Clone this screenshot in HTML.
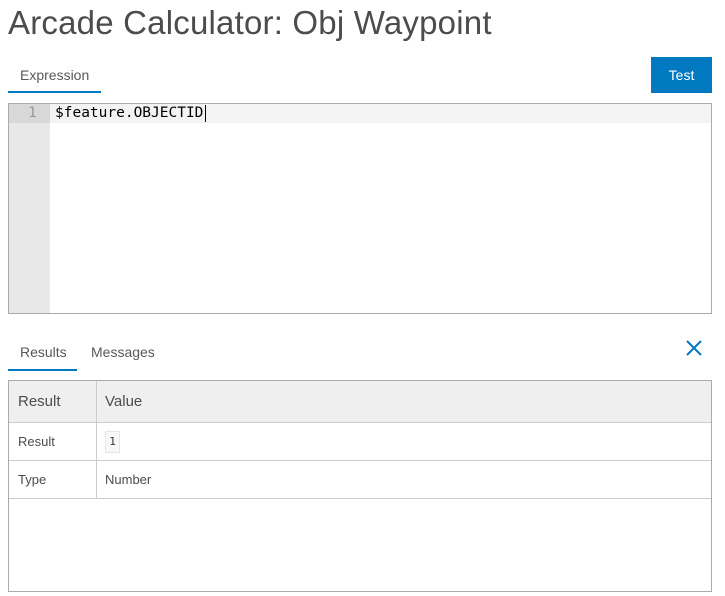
<!DOCTYPE html>
<html><head><style>
body{margin:0;width:725px;height:596px;background:#fff;font-family:"Liberation Sans",sans-serif;color:#4c4c4c;position:relative;overflow:hidden}
.a{position:absolute}
</style></head><body>
<div class="a" style="left:8px;top:4px;font-size:33px;color:#4c4c4c;letter-spacing:0.2px">Arcade Calculator: Obj Waypoint</div>
<div class="a" style="left:20px;top:67px;font-size:14px;color:#595959">Expression</div>
<div class="a" style="left:8px;top:91px;width:93px;height:2px;background:#0079c1"></div>
<div class="a" style="left:651px;top:57px;width:61px;height:36px;background:#0079c1;color:#fff;font-size:14px;text-align:center;line-height:36px">Test</div>
<div class="a" style="left:8px;top:103px;width:702px;height:209px;border:1px solid #aaa"></div>
<div class="a" style="left:9px;top:104px;width:41px;height:209px;background:#e8e8e8"></div>
<div class="a" style="left:9px;top:104px;width:702px;height:19px;background:#f3f3f3"></div>
<div class="a" style="left:9px;top:104px;width:41px;height:19px;background:#d8d8d8"></div>
<div class="a" style="left:28px;top:105px;font-family:'DejaVu Sans Mono',monospace;font-size:14.5px;color:#999">1</div>
<div class="a" style="left:55px;top:105px;font-family:'DejaVu Sans Mono',monospace;font-size:14.5px;color:#000">$feature.OBJECTID</div>
<div class="a" style="left:205px;top:105px;width:1px;height:17px;background:#000"></div>
<div class="a" style="left:20px;top:344px;font-size:14px;color:#595959">Results</div>
<div class="a" style="left:91px;top:344px;font-size:14px;color:#595959">Messages</div>
<div class="a" style="left:8px;top:369px;width:69px;height:2px;background:#0079c1"></div>
<svg class="a" style="left:686px;top:340px" width="16" height="16"><path d="M1 1L15 15M15 1L1 15" stroke="#0079c1" stroke-width="2"/></svg>
<div class="a" style="left:8px;top:380px;width:702px;height:210px;border:1px solid #aaa"></div>
<div class="a" style="left:9px;top:381px;width:702px;height:41px;background:#efefef;border-bottom:1px solid #ccc"></div>
<div class="a" style="left:96px;top:381px;width:1px;height:117px;background:#ccc"></div>
<div class="a" style="left:9px;top:460px;width:702px;height:1px;background:#ccc"></div>
<div class="a" style="left:9px;top:498px;width:702px;height:1px;background:#ccc"></div>
<div class="a" style="left:18px;top:393px;font-size:15px">Result</div>
<div class="a" style="left:105px;top:393px;font-size:15px">Value</div>
<div class="a" style="left:18px;top:434px;font-size:13px">Result</div>
<div class="a" style="left:105px;top:431px;width:13px;height:20px;background:#f8f8f8;border:1px solid #e6e6e6;font-family:'DejaVu Sans Mono',monospace;font-size:11px;line-height:20px;text-align:center;color:#333">1</div>
<div class="a" style="left:18px;top:472px;font-size:13px">Type</div>
<div class="a" style="left:105px;top:472px;font-size:13px">Number</div>
</body></html>
